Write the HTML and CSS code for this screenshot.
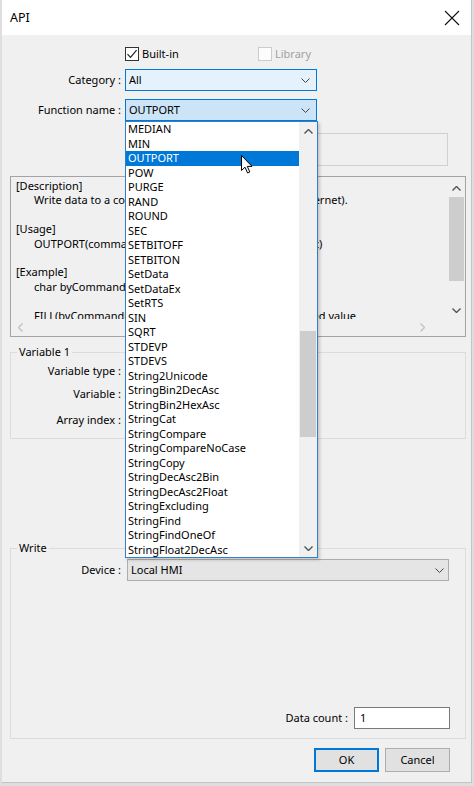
FILE: index.html
```html
<!DOCTYPE html>
<html>
<head>
<meta charset="utf-8">
<title>API</title>
<link rel="stylesheet" href="styles.css">
</head>
<body>
<div class="window">
  <div class="titlebar">
    <span class="title">API</span>
    <svg class="close" width="16" height="16" viewBox="0 0 16 16"><path d="M1 1 L15 15 M15 1 L1 15" stroke="#111" stroke-width="1.1" fill="none"/></svg>
  </div>
  <div class="content">
    <div class="checks">
      <label class="check"><span class="box"><svg width="12" height="12" viewBox="0 0 12 12"><path d="M1.5 6.2 L4.5 9.3 L10.6 2.2" stroke="#222" stroke-width="1.2" fill="none"/></svg></span>Built-in</label>
      <label class="check disabled"><span class="box"></span>Library</label>
    </div>
    <div class="form-row">
      <span class="lbl">Category :</span>
      <div class="combo hover"><span>All</span><svg class="chev" width="9" height="5" viewBox="0 0 9 5"><path d="M0.5 0.5 L4.5 4.5 L8.5 0.5" stroke="#444" stroke-width="1" fill="none"/></svg></div>
    </div>
    <div class="form-row">
      <span class="lbl">Function name :</span>
      <div class="combo pressed"><span>OUTPORT</span><svg class="chev" width="9" height="5" viewBox="0 0 9 5"><path d="M0.5 0.5 L4.5 4.5 L8.5 0.5" stroke="#444" stroke-width="1" fill="none"/></svg></div>
    </div>
    <div class="readonly-row"><div class="readonly"></div></div>
    <div class="desc">
      <div class="desc-main">
        <div class="desc-text">
          <div>[Description]</div>
          <div class="ind">Write data to a communication port (COM Ports or Ethernet).</div>
          <div class="blank"></div>
          <div>[Usage]</div>
          <div class="ind">OUTPORT(command[start], device_name, data_amount)</div>
          <div class="blank"></div>
          <div>[Example]</div>
          <div class="ind">char byCommand[32];</div>
          <div class="blank"></div>
          <div class="ind">FILL(byCommand[0], 0, 32);&nbsp;&nbsp;&nbsp;// Initialize buffer with fixed value</div>
        </div>
        <div class="vscroll">
          <svg class="arrow" width="9" height="5" viewBox="0 0 9 5"><path d="M0.5 4.5 L4.5 0.5 L8.5 4.5" stroke="#555" stroke-width="1.4" fill="none"/></svg>
          <div class="vtrack"><div class="vthumb"></div></div>
          <svg class="arrow" width="9" height="5" viewBox="0 0 9 5"><path d="M0.5 0.5 L4.5 4.5 L8.5 0.5" stroke="#555" stroke-width="1.4" fill="none"/></svg>
        </div>
      </div>
      <div class="hscroll-row">
        <div class="hscroll">
          <svg width="5" height="9" viewBox="0 0 5 9"><path d="M4.5 0.5 L0.5 4.5 L4.5 8.5" stroke="#c2c2c2" stroke-width="1.4" fill="none"/></svg>
          <svg width="5" height="9" viewBox="0 0 5 9"><path d="M0.5 0.5 L4.5 4.5 L0.5 8.5" stroke="#c2c2c2" stroke-width="1.4" fill="none"/></svg>
        </div>
        <div class="corner"></div>
      </div>
    </div>
    <fieldset class="group var-group">
      <legend>Variable 1</legend>
      <div class="grow r1"><span class="lbl">Variable type :</span><div class="combo plain"><span>Word</span></div></div>
      <div class="grow r2"><span class="lbl">Variable :</span><div class="combo plain"><span>w</span></div></div>
      <div class="grow r3"><span class="lbl">Array index :</span><div class="field"><span>0</span></div></div>
    </fieldset>
    <fieldset class="group write-group">
      <legend>Write</legend>
      <div class="write-body">
        <div class="grow device-row"><span class="lbl">Device :</span><div class="combo device"><span>Local HMI</span><svg class="chev" width="9" height="5" viewBox="0 0 9 5"><path d="M0.5 0.5 L4.5 4.5 L8.5 0.5" stroke="#444" stroke-width="1" fill="none"/></svg></div></div>
        <div class="count-row"><span class="lbl">Data count :</span><div class="field count"><span>1</span></div></div>
      </div>
    </fieldset>
    <div class="buttons">
      <button class="btn default">OK</button>
      <button class="btn">Cancel</button>
    </div>
  </div>

  <div class="dropdown">
    <ul class="items">
      <li>MEDIAN</li>
      <li>MIN</li>
      <li class="sel">OUTPORT</li>
      <li>POW</li>
      <li>PURGE</li>
      <li>RAND</li>
      <li>ROUND</li>
      <li>SEC</li>
      <li>SETBITOFF</li>
      <li>SETBITON</li>
      <li>SetData</li>
      <li>SetDataEx</li>
      <li>SetRTS</li>
      <li>SIN</li>
      <li>SQRT</li>
      <li>STDEVP</li>
      <li>STDEVS</li>
      <li>String2Unicode</li>
      <li>StringBin2DecAsc</li>
      <li>StringBin2HexAsc</li>
      <li>StringCat</li>
      <li>StringCompare</li>
      <li>StringCompareNoCase</li>
      <li>StringCopy</li>
      <li>StringDecAsc2Bin</li>
      <li>StringDecAsc2Float</li>
      <li>StringExcluding</li>
      <li>StringFind</li>
      <li>StringFindOneOf</li>
      <li>StringFloat2DecAsc</li>
    </ul>
    <div class="dd-scroll">
      <svg class="arrow" width="9" height="5" viewBox="0 0 9 5"><path d="M0.5 4.5 L4.5 0.5 L8.5 4.5" stroke="#555" stroke-width="1.4" fill="none"/></svg>
      <div class="dd-track"><div class="dd-thumb"></div></div>
      <svg class="arrow" width="9" height="5" viewBox="0 0 9 5"><path d="M0.5 0.5 L4.5 4.5 L8.5 0.5" stroke="#555" stroke-width="1.4" fill="none"/></svg>
    </div>
  </div>

  <svg class="cursor" width="13" height="19" viewBox="0 0 13 19"><path d="M0.5 0.5 L0.5 15.5 L4 12.2 L6.6 18 L8.8 17 L6.3 11.4 L11 11.4 Z" fill="#fff" stroke="#000" stroke-width="1" stroke-linejoin="round"/></svg>
</div>
</body>
</html>
```
FILE: styles.css
```css
* { box-sizing: border-box; }
html, body { margin: 0; padding: 0; }
body {
  background: #dedede;
  font-family: "Noto Sans", "Open Sans", sans-serif;
  font-size: 11px;
  color: #000;
  width: 474px;
  height: 786px;
  overflow: hidden;
}
.window {
  position: relative;
  margin-left: 2px;
  width: 470px;
  height: 783px;
  background: #f0f0f0;
  border-right: 1px solid #c4c4c4;
  border-bottom: 1px solid #c4c4c4;
  display: flex;
  flex-direction: column;
}
.titlebar {
  height: 35px;
  background: #fff;
  display: flex;
  align-items: center;
  justify-content: space-between;
  padding: 0 11px 0 8px;
  flex: none;
}
.title { font-size: 12.5px; color: #000; }
.close { display: block; margin-top: 1px; }

.content {
  padding: 0 5px 0 8px;
  display: flex;
  flex-direction: column;
}

.checks {
  margin-top: 11px;
  height: 15px;
  display: grid;
  grid-template-columns: 133px auto;
  padding-left: 115px;
}
.check { display: flex; align-items: center; gap: 3px; line-height: 15px; }
.check .box {
  width: 14px; height: 14px;
  border: 1px solid #333;
  background: #fff;
  display: flex; align-items: center; justify-content: center;
}
.check.disabled { color: #a0a0a0; }
.check.disabled .box { border-color: #cccccc; background: #fcfcfc; }

.form-row {
  margin-top: 8px;
  display: grid;
  grid-template-columns: 111px 192px;
  column-gap: 4px;
  align-items: center;
  height: 22px;
}
.lbl { text-align: right; white-space: nowrap; line-height: 14px; }
.combo {
  height: 22px;
  border: 1px solid #adadad;
  background: #e1e1e1;
  display: flex;
  align-items: center;
  justify-content: space-between;
  padding: 0 6px 0 3px;
  line-height: 20px;
  white-space: nowrap;
}
.combo.hover { background: #e5f1fb; border-color: #0078d7; }
.combo.pressed { background: #cce4f7; border-color: #0078d7; }
.chev { display: block; }

.readonly-row { margin-top: 12px; padding-left: 115px; }
.readonly {
  width: 323px; height: 33px;
  border: 1px solid #d0d0d0;
  background: #f0f0f0;
}

.desc {
  margin-top: 10px;
  height: 161px;
  border: 1px solid #a3a3a3;
  background: #f0f0f0;
  display: flex;
  flex-direction: column;
}
.desc-main { flex: 1; display: flex; min-height: 0; }
.desc-text {
  flex: 1;
  overflow: hidden;
  padding: 2px 0 0 5px;
  line-height: 14.4px;
  white-space: nowrap;
  color: #000;
}
.desc-text .ind { padding-left: 18px; }
.desc-text .blank { height: 14.4px; }
.vscroll {
  width: 17px;
  display: flex;
  flex-direction: column;
  align-items: center;
  background: #f0f0f0;
}
.vscroll .arrow { margin: 9px 0 6px; }
.vscroll .arrow:last-child { margin: 7px 0 6px; }
.vtrack { flex: 1; width: 17px; display: flex; flex-direction: column; }
.vthumb { margin: 0 1px; height: 84px; background: #cdcdcd; }
.hscroll-row { height: 17px; display: flex; }
.hscroll {
  flex: 1;
  display: flex;
  align-items: center;
  justify-content: space-between;
  padding: 0 23px 0 7px;
}
.hscroll svg { display: block; }
.corner { width: 17px; background: #f0f0f0; }

.group {
  margin: 0;
  padding: 0 15px 0 0;
  border: 1px solid #dcdcdc;
  min-width: 0;
}
.group legend {
  margin-left: 6px;
  padding: 0 2px;
  line-height: 14px;
}
.var-group { margin-top: 8px; padding-bottom: 7px; }
.grow {
  display: grid;
  grid-template-columns: 110px 192px;
  column-gap: 4px;
  align-items: center;
  height: 22px;
}
.var-group .r1 { margin-top: 1px; }
.var-group .r2 { margin-top: 1px; }
.var-group .r3 { margin-top: 4px; }
.combo.plain { background: #fff; }
.field {
  height: 22px;
  border: 1px solid #7a7a7a;
  background: #fff;
  padding: 0 5px;
  line-height: 20px;
}
.write-group {
  margin-top: 102px;
  padding-bottom: 9px;
}
.write-body {
  height: 174px;
  display: flex;
  flex-direction: column;
  justify-content: space-between;
  padding-top: 4px;
}
.device-row { grid-template-columns: 110px 322px; column-gap: 6px; }
.combo.device { background: #e5e5e5; border-color: #adadad; padding-left: 3px; padding-right: 4px; }
.count-row {
  display: flex;
  justify-content: flex-end;
  align-items: center;
  gap: 6px;
  height: 22px;
}
.field.count { width: 96px; }

.buttons {
  margin-top: 9px;
  display: flex;
  justify-content: flex-end;
  gap: 6px;
  padding-right: 16px;
}
.btn {
  width: 65px;
  height: 24px;
  border: 1px solid #adadad;
  background: #e1e1e1;
  font-family: "Noto Sans", "Open Sans", sans-serif;
  font-size: 11px;
  color: #000;
  padding: 0;
  line-height: 20px;
}
.btn.default { border: 2px solid #0078d7; }

.dropdown {
  position: absolute;
  left: 123px;
  top: 121px;
  width: 193px;
  height: 437px;
  border: 1px solid #2f7fca;
  background: #fff;
  display: flex;
  box-shadow: 2px 2px 3px rgba(0,0,0,0.18);
}
.items {
  list-style: none;
  margin: 0;
  padding: 0;
  flex: 1;
}
.items li {
  height: 14.5px;
  line-height: 14.5px;
  padding-left: 2px;
  white-space: nowrap;
  overflow: hidden;
}
.items li.sel { background: #0078d7; color: #fff; }
.dd-scroll {
  width: 18px;
  background: #f0f0f0;
  display: flex;
  flex-direction: column;
  align-items: center;
}
.dd-scroll .arrow { margin: 7px 0 6px; }
.dd-scroll .arrow:last-child { margin: 6px 0 6px; }
.dd-track { flex: 1; width: 18px; position: relative; }
.dd-thumb {
  position: absolute;
  left: 1px; right: 1px;
  top: 191px;
  height: 106px;
  background: #cdcdcd;
}
.cursor {
  position: absolute;
  left: 239px;
  top: 155px;
}
```
